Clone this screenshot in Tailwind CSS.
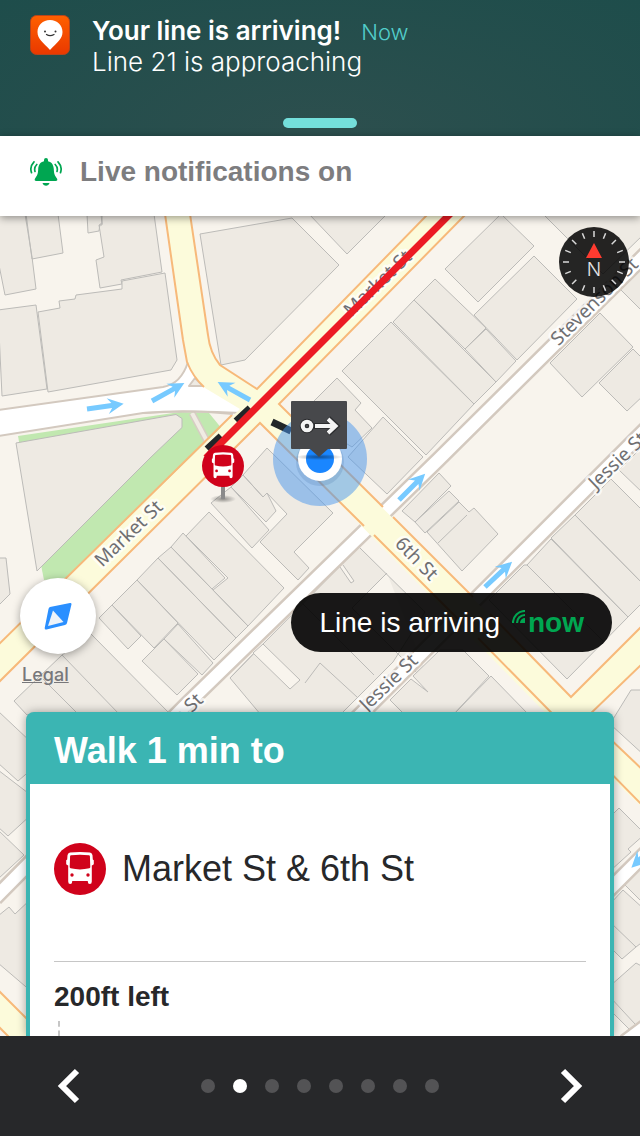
<!DOCTYPE html>
<html lang="en">
<head>
    <meta charset="UTF-8">
    <meta name="viewport" content="width=device-width, initial-scale=1.0">
    <title>Live directions</title>
    <script src="https://cdn.jsdelivr.net/npm/@tailwindcss/browser@4"></script>
</head>
<body class="min-h-screen flex flex-col bg-[#27282a] font-['Liberation_Sans',Arial,sans-serif]">

    <!-- Push notification -->
    <header class="h-[136px] shrink-0 flex flex-col justify-between px-[30px] pt-[15px] pb-2 bg-radial-[at_50%_100%] from-[#2d4f4e] to-[#1e4d4b] font-['Inter',sans-serif] text-white">
        <div class="flex gap-[22px]">
            <svg class="size-10 shrink-0" viewBox="0 0 40 40" aria-hidden="true">
                <defs>
                    <linearGradient id="app" x1="0" y1="0" x2="0" y2="1">
                        <stop offset="0" stop-color="#ff6000"/>
                        <stop offset="1" stop-color="#e93800"/>
                    </linearGradient>
                </defs>
                <rect x=".5" y=".5" width="39" height="39" rx="6" fill="url(#app)" stroke="#b9441a"/>
                <path d="M20 5C12.800 5 7.500 10.400 7.500 17c0 7 5.500 10.500 12.500 18 7-7.500 12.500-11 12.500-18C32.500 10.400 27.200 5 20 5z" fill="#fff"/>
                <circle cx="15" cy="16.500" r="1" fill="#333"/>
                <circle cx="25.500" cy="16.500" r="1" fill="#333"/>
                <path d="M16.500 19.500q3.500 2.400 7.500 0" fill="none" stroke="#333" stroke-width="1.300" stroke-linecap="round"/>
            </svg>
            <div class="text-[26px] leading-[30px]">
                <div class="flex items-baseline gap-5 pt-px">
                    <h1 class="font-semibold">Your line is arriving!</h1>
                    <span class="text-[22px] font-light text-[#52cdca]">Now</span>
                </div>
                <p class="font-light">Line 21 is approaching</p>
            </div>
        </div>
        <div class="w-[74px] h-2.5 rounded-full bg-[#74dfdb] self-center"></div>
    </header>

    <!-- Live status -->
    <div class="relative z-10 h-20 shrink-0 flex items-center gap-[18px] px-[30px] pb-2 bg-white shadow-[0_2px_8px_rgba(0,0,0,0.4)]">
        <svg class="w-8 h-7 shrink-0" viewBox="0 0 32 28" fill="#00a651" aria-hidden="true">
            <path d="M14 2a2 2 0 0 1 4 0v1.300c4 .9 5.600 4 5.800 8 .2 4.500 1 6.400 3 8.900 1 1.400.6 2.800-1.200 2.800H6.400c-1.800 0-2.200-1.400-1.200-2.800 2-2.500 2.800-4.400 3-8.900.2-4 1.800-7.100 5.800-8z"/>
            <path d="M12.500 25h7c-.5 1.700-1.900 2.700-3.500 2.700s-3-1-3.500-2.700z"/>
            <g fill="none" stroke="#00a651" stroke-width="1.700" stroke-linecap="round">
                <path d="M6.800 6.500q-3 3-1.800 7M4 3.800q-4.600 5-2.500 10.800M25.200 6.500q3 3 1.800 7M28 3.800q4.600 5 2.500 10.800"/>
            </g>
        </svg>
        <p class="text-[28px] leading-8 font-bold text-[#7d7d7f]">Live notifications on</p>
    </div>

    <main class="relative flex-1 flex flex-col overflow-hidden bg-[#f8f4ed]">

        <!-- Map -->
        <svg class="absolute inset-0 size-full" viewBox="0 216 640 820" preserveAspectRatio="xMidYMin slice" role="img" aria-label="Map around Market St and 6th St">
            <defs>
                <path id="arrow" d="M0-2.500h25L21-8l16 8-16 8 4-5.500H0z"/>
                <g id="bus">
                    <path fill-rule="evenodd" d="M16 9.500q10-1.200 20 0 2.300.4 2.500 2.800l.3 4.200 1 .8v4l-1 .8-1 .5V38.500q0 2.500-2 2.500t-2-2.500V38H18.200v.5q0 2.500-2 2.500t-2-2.500V22.600l-1-.5-1-.8v-4l1-.8.3-4.200Q13.700 9.900 16 9.500zM17 12.300q-.8.200-.9 1L15.700 24q0 1 .9 1.300 9.400 2.300 18.800 0 .9-.3.9-1.300l-.4-10.700q-.1-.8-.9-1-9-1-18 0z"/>
                    <circle cx="18" cy="32" r="1.700" fill="#d0021b"/>
                    <circle cx="34" cy="32" r="1.700" fill="#d0021b"/>
                </g>
                <radialGradient id="pin-shadow">
                    <stop offset="0" stop-color="#000" stop-opacity=".4"/>
                    <stop offset="1" stop-color="#000" stop-opacity="0"/>
                </radialGradient>
            </defs>

            <!-- Park -->
            <path fill="#c1e8b0" d="M18 436 180 412l29 1 18 22-160 143-23 2-2-10z"/>
            <path d="m192 413 16 30" stroke="#d6cdc3" stroke-width="7"/>
            <path d="m192 413 16 30" stroke="#f0ebe3" stroke-width="4"/>

            <!-- Buildings -->
            <g fill="#eeeae3" stroke="#bcbbb8" stroke-width="1">
                <path d="M-2 214H25l7 43 4 32-31 6-7-35zM26 214h32l5 39-31 6zM87 214l1 19 11-2 1-7h2l-1-10zM102 214v11h-3l5 32-8 3 4 28 22-4-1-4 41-8-8-58z"/>
                <path d="m-2 310 38-5 11 84-45 7zM38 312l22-4-1-7 16-2 1-4 46-6v-8l43-8 12 87-6 10-123 22zM200 234l92-16 47 47-94 95-24 5z"/>
                <path d="m309 214 38 40 40-40zM445 269l56-55 33 32-56 56zM474 315l60-59 43 43-60 61zM342 371l49-49 83 82-48 51z"/>
                <path d="m393 322 21-22 82 82-22 22zM414 300l21-21 51 49-21 21zM465 349l21-20 30 32-20 21zM550 363l50-50 33 34-51 50zM599 383l34-34 12 12v33l-18 17zM543 214l60 60 42-41v-19zM618 287l27-25v52z"/>
                <path d="m300 415 37-37 24 25-6 7 17 18-20 19zM348 457l35-40 40 40-36 37zM402 511l37-38 12 13-36 36zM415 522l34-31 10 10-34 32z"/>
                <path d="m427 532 32-30 10 10 5-4 24 26-36 37zM438 543l29-28M575 515l36-36 34 34v73zM551 538l24-23 70 71v14l-17 17zM489 600l35-35 3 0 24-26 77 78-61 62zM527 565l77 77M619 470l26-26v51z"/>
                <path d="m359 547 66 65-32 50-53 53h-79l-31-37 33-34zM302 603l72 72M387 573l-35 35 80 80M340 567l11 16 3-2-11-16M230 678l33-34M305 683l15-20 37 34"/>
                <path fill="#f8f4ed" d="m253 653 10-9 37 36-10 9z"/>
                <path d="m413 676 27-26h23l26 26-35 38h-50l-14-14 21-21 17 13zM491 676l37 38h-74z"/>
                <path d="m186 536 23-24 75 76-36 38-35-36 15-12zM171 547l12-14 42 45-13 11zM158 558l13-11 77 79-12 12zM137 580l21-22 78 80-22 22zM112 605l25-25 41 43-24 25zM99 618l13-13 29 31-13 13z"/>
                <path d="m142 661 22-22 34 35-21 21zM164 639l14-15 35 39-11 12zM211 503l20-16 38 43-17 18zM267 448l66 65-39 39 15 16-11 12-38-38 27-28-20-21-4 4-20-22zM231 487l12-12 20 22 4-4 9 18-10 11z"/>
                <path d="m91 634 80 81H27l-13-14 48-46zM62 655l58 60M43 679l36 36M-2 558h8l4 36-12 12z"/>
                <path d="M16 443 176 414.500l6 4v9L150 458 37 571z"/>
                <path d="m-2 711 34 32v26l-14 12-20-18zM-2 770l34 26v18l-24 22-10-9zM-2 830l26 25-26 24zM-2 916l11-9 6 7 17-16v94l-34-29z"/>
                <path d="m610 724 35 32V690h-14zM610 817l9-9 26 26-17 15 3 3-21 19zM623 883l22-20v42zM610 904l13-14 22 20v30l-9 7-14 12-12-12zM610 922l26 25M610 986l26-23 9 5v60l-13 4-22-22zM610 997l25 27"/>
            </g>

            <!-- Minor streets -->
            <g fill="none" stroke-linejoin="round">
                <g stroke="#d3c9bf" stroke-width="17">
                    <path d="M665 235 438 460 185 706-5 898M670 405 600 475 481 594 345 730M605 894l45-45M625 1042l20-15"/>
                </g>
                <g stroke="#fff" stroke-width="12">
                    <path d="M665 235 438 460 185 706-5 898M670 405 600 475 481 594 345 730M605 894l45-45M625 1042l20-15"/>
                </g>
                <path fill="#fff" stroke="#d3c9bf" stroke-width="2" d="M-2 410 163 387q18-3 25-25l30 10 40 36-18 5q-45-3-97 0L-2 436z"/>
                <path fill="#eeeae3" stroke="#d3c9bf" stroke-width="2" d="m189 386 6-8 8 8z"/>
            </g>

            <!-- Main streets -->
            <g fill="#fcfbdb" stroke="#f7b97a" stroke-width="2">
                <path stroke="none" d="m165 214 19 126 4 22q6 16 17 26l35 21L-2 644v39L260 423 587 755 645 810v-40L587 717l58-56v-38l-74 74L279 404 466 214h-38L257 389l-37-24q-10-12-12-30L190 214z"/>
                <path fill="none" d="m165 214 18 126 4 22q6 15 17 25M190 214l18 121q2 18 12 30l37 24L428 214M466 214 279 404l104 103M393 517l80 80M490 614l81 83 74-74M645 661l-58 56 58 55M232 415-2 645M-2 683 260 423l104 103M374 535l84 84M478 638l167 170"/>
                <path stroke="none" d="m-2 990 45 45-30 7-15-15z"/>
                <path fill="none" d="m-2 990 40 40M-2 1026l16 16"/>
            </g>
            <path fill="none" stroke="#d3c9bf" stroke-width="2" d="M143 413q45-4 90 1"/>

            <!-- Direction arrows -->
            <g fill="#77caff">
                <use href="#arrow" transform="translate(87 409) rotate(-8)"/>
                <use href="#arrow" transform="translate(152 401) rotate(-29)"/>
                <use href="#arrow" transform="translate(250 400) rotate(-151)"/>
                <use href="#arrow" transform="translate(399 500) rotate(-45)"/>
                <use href="#arrow" transform="translate(485 587) rotate(-43)"/>
                <use href="#arrow" transform="translate(658 842) rotate(136)"/>
            </g>

            <!-- Street names -->
            <g class="font-['Noto_Sans',sans-serif] text-[19px]" fill="#6f6f72" stroke="#fff" stroke-opacity=".7" stroke-width="5" stroke-linejoin="round" paint-order="stroke" text-anchor="middle">
                <text transform="translate(382 288) rotate(-44)">Market St</text>
                <text transform="translate(133 538) rotate(-44)">Market St</text>
                <text transform="translate(599 306) rotate(-45)">Stevenson St</text>
                <text transform="translate(622 465) rotate(-44)">Jessie St</text>
                <text transform="translate(393 687) rotate(-44)">Jessie St</text>
                <text transform="translate(412 563) rotate(46)">6th St</text>
                <text transform="translate(163 741) rotate(-44)">Stevenson St</text>
            </g>

            <!-- Route -->
            <path d="m250 408-14 13M221 436l-14 13" stroke="#222628" stroke-width="7"/>
            <path d="M456 208 206 458" stroke="#ec1c24" stroke-width="7"/>
            <path d="m272 422 19 9" stroke="#222628" stroke-width="7"/>

            <!-- Bus stop pin -->
            <ellipse cx="223" cy="499" rx="13" ry="4" fill="url(#pin-shadow)"/>
            <path d="M223 485v14" stroke="#8a8a8a" stroke-width="4"/>
            <circle cx="223" cy="466" r="21" fill="#d0021b"/>
            <use href="#bus" fill="#fff" transform="translate(202 445) scale(.81)"/>

            <!-- Current position -->
            <circle cx="320" cy="459" r="47" fill="#4895ee" fill-opacity=".5"/>
            <circle cx="320" cy="462" r="24" fill="#1d4f90" fill-opacity=".14"/>
            <circle cx="320" cy="459" r="22" fill="#fff"/>
            <circle cx="320" cy="459" r="14" fill="#1a86ff"/>
            <ellipse cx="319" cy="457" rx="24" ry="3" fill="url(#pin-shadow)"/>
            <path fill="#47484b" d="M292 401h54q1 0 1 1v46q0 1-1 1h-18l-9 8-9-8h-18q-1 0-1-1v-46q0-1 1-1z"/>
            <g fill="none" stroke="#2c2d2f" stroke-width="6">
                <circle cx="307" cy="426" r="4.300"/>
                <path d="M314 426h21M328 418.500l8 7.500-8 7.500"/>
            </g>
            <g fill="none" stroke="#f4f4f4" stroke-width="4">
                <circle cx="307" cy="426" r="4.300"/>
                <path d="M315 426h20M328 419l7.500 7-7.500 7"/>
            </g>
        </svg>

        <!-- Map controls -->
        <div class="relative flex-1 flex flex-col justify-between">
            <button type="button" aria-label="Point map north" class="self-end mt-[11px] mr-[11px] size-[70px] rounded-full bg-black/85">
                <svg class="size-full" viewBox="0 0 70 70" aria-hidden="true">
                    <g stroke="#d8d8d8" stroke-width="1.500">
                        <path id="ticks" d="M35 4v6M35 60v6M4 35h6M60 35h6"/>
                        <use href="#ticks" transform="rotate(22 35 35)"/>
                        <use href="#ticks" transform="rotate(45 35 35)"/>
                        <use href="#ticks" transform="rotate(-22 35 35)"/>
                    </g>
                    <path d="m35 16 8 15H27z" fill="#ff3b30"/>
                    <text x="35" y="49" class="font-['Inter',sans-serif] text-[19px] font-light" fill="#e4e4e4" text-anchor="middle">N</text>
                </svg>
            </button>
            <div class="flex items-start justify-between pl-5 pr-7 pb-[26px]">
                <div class="flex flex-col items-start gap-2.5">
                    <button type="button" aria-label="Follow heading" class="size-[76px] rounded-full bg-white shadow-[0_2px_8px_rgba(0,0,0,0.35)]">
                        <svg class="size-full" viewBox="0 0 76 76" aria-hidden="true">
                            <path d="M30 29 50 25q1.500-.3 1.500 1.200L47 45q-.3 1.500-2 2L26.500 51.500q-2 .3-1.800-1.500L28.500 31q.3-1.500 1.500-2z" fill="#2a8fff"/>
                            <path d="m33 32.500 10.500 11.500L28 48z" fill="#eef3f9"/>
                        </svg>
                    </button>
                    <a href="#" class="ml-0.5 font-['Inter',sans-serif] text-[18px] leading-[22px] font-medium text-[#77777a] underline">Legal</a>
                </div>
                <div class="mt-[15px] h-[59px] flex items-center px-7 rounded-full bg-black/90 text-[28px] text-white">
                    <span>Line is arriving</span>
                    <svg class="ml-3 mb-3 size-3.5" viewBox="0 0 14 14" fill="none" stroke="#00a651" stroke-width="2.200" aria-hidden="true">
                        <path d="M1 13A12 12 0 0 1 13 1M5 13A8 8 0 0 1 13 5"/>
                        <path d="M8 13A5 5 0 0 1 13 8v5z" fill="#00a651" stroke="none"/>
                    </svg>
                    <strong class="ml-0.5 text-[#00a651]">now</strong>
                </div>
            </div>
        </div>

        <!-- Current step -->
        <section class="relative mx-[26px] rounded-t-lg bg-[#3bb5b3] shadow-[0_0_10px_rgba(0,0,0,0.35)]">
            <h2 class="h-[72px] flex items-center px-7 pt-1.5 text-[36px] font-bold text-white">Walk 1 min to</h2>
            <div class="mx-1 px-6 bg-white text-[#27282a]">
                <div class="h-[178px] flex items-center gap-4 pb-2 border-b border-[#c6c6c6]">
                    <svg class="size-[52px] shrink-0" viewBox="0 0 52 52" aria-hidden="true">
                        <circle cx="26" cy="26" r="26" fill="#d0021b"/>
                        <use href="#bus" fill="#fff"/>
                    </svg>
                    <p class="text-[36px]">Market St &amp; 6th St</p>
                </div>
                <h3 class="pt-[19px] text-[28px] leading-8 font-bold">200ft left</h3>
                <div class="mt-2 ml-1 h-[15px] border-l-2 border-dashed border-[#c6c6c6]"></div>
            </div>
        </section>
    </main>

    <!-- Step pager -->
    <nav aria-label="Steps" class="relative h-[100px] shrink-0 flex items-center justify-between px-14 bg-[#27282a]">
        <button type="button" aria-label="Previous step">
            <svg class="w-6 h-9" viewBox="0 0 24 36" fill="none" stroke="#fff" stroke-width="6" aria-hidden="true">
                <path d="M21 3 6 18l15 15"/>
            </svg>
        </button>
        <div class="flex gap-[18px]">
            <span class="size-3.5 rounded-full bg-[#535355]"></span>
            <span class="size-3.5 rounded-full bg-white"></span>
            <span class="size-3.5 rounded-full bg-[#535355]"></span>
            <span class="size-3.5 rounded-full bg-[#535355]"></span>
            <span class="size-3.5 rounded-full bg-[#535355]"></span>
            <span class="size-3.5 rounded-full bg-[#535355]"></span>
            <span class="size-3.5 rounded-full bg-[#535355]"></span>
            <span class="size-3.5 rounded-full bg-[#535355]"></span>
        </div>
        <button type="button" aria-label="Next step">
            <svg class="w-6 h-9" viewBox="0 0 24 36" fill="none" stroke="#fff" stroke-width="6" aria-hidden="true">
                <path d="m3 3 15 15L3 33"/>
            </svg>
        </button>
    </nav>

</body>
</html>
